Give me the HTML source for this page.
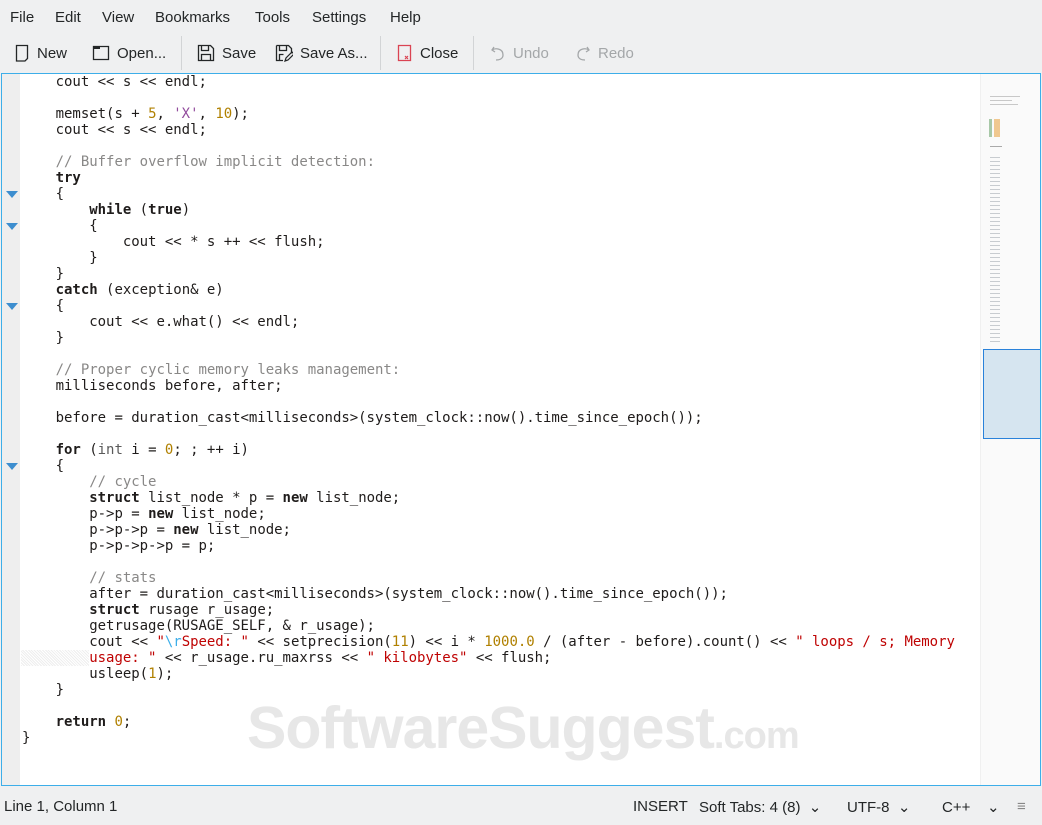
<!DOCTYPE html>
<html><head><meta charset="utf-8"><style>
*{margin:0;padding:0;box-sizing:border-box}
body{width:1042px;height:825px;background:#eff0f1;font-family:"Liberation Sans","DejaVu Sans",sans-serif;color:#232627;position:relative;overflow:hidden}
.menu{position:absolute;top:0;left:0;height:36px;font-size:15px}
.menu span{position:absolute;top:9px;white-space:nowrap}
.tb{position:absolute;top:36px;left:0;right:0;height:36px;font-size:15px}
.tb .b{position:absolute;top:8px;white-space:nowrap;display:flex;align-items:center}
.tb .b svg{margin-right:7px}
.sep{position:absolute;top:36px;width:1px;height:34px;background:#d2d4d6}
.dis{color:#a4a7a9}
.ed{position:absolute;left:1px;top:73px;width:1040px;height:713px;border:1px solid #3daee9;background:#fff;overflow:hidden}
.gut{position:absolute;left:0;top:0;width:18px;height:100%;background:#eeeeee}
.code{position:absolute;left:20px;top:0;font-family:"DejaVu Sans Mono","Liberation Mono",monospace;font-size:14px;letter-spacing:-0.025px;line-height:16px;white-space:pre;color:#1f1c1b}
.k{font-weight:bold}.c{color:#898887}.n{color:#b08000}.s{color:#bf0303}.ch{color:#924c9d}.e{color:#3daee9}
.mm{position:absolute;left:978px;top:0;width:60px;height:100%;background:#fafafa;border-left:1px solid #f0f0f0}
.vis{position:absolute;left:981px;top:275px;width:58px;height:90px;background:#d6e5f0;border:1px solid #2a82da}
.fold{position:absolute;left:4px;width:0;height:0;border-left:6px solid transparent;border-right:6px solid transparent;border-top:7px solid #3d8ecf}
.wm{position:absolute;left:247px;top:694px;font-size:59px;font-weight:bold;color:#e7e7e7;letter-spacing:-1px;font-family:"Liberation Sans",sans-serif}
.wm small{font-size:38px}
.st{position:absolute;top:786px;left:0;right:0;height:39px;font-size:15px}
.st span{position:absolute;top:12px;white-space:nowrap}
.ml{position:absolute;height:1px;background:#c8c8c8}
</style></head><body>
<div class="menu">
<span style="left:10px">File</span><span style="left:55px">Edit</span><span style="left:102px">View</span><span style="left:155px">Bookmarks</span><span style="left:255px">Tools</span><span style="left:312px">Settings</span><span style="left:390px">Help</span>
</div>
<div class="tb">
<div class="b" style="left:14px"><svg width="16" height="18" viewBox="0 0 16 18"><path d="M2.5 1.5h11v13l-2.5 2.5h-8.5z" fill="none" stroke="#232627" stroke-width="1.3"/></svg>New</div>
<div class="b" style="left:92px"><svg width="18" height="18" viewBox="0 0 18 18"><path d="M1.5 2.5h15v13h-15z" fill="none" stroke="#232627" stroke-width="1.3"/><path d="M1 2h7v3h-7z" fill="#232627"/></svg>Open...</div>
<div class="b" style="left:197px"><svg width="18" height="18" viewBox="0 0 18 18"><path d="M1.5 1.5h12l3 3v12h-15z" fill="none" stroke="#232627" stroke-width="1.3"/><path d="M4.5 1.5v5h7v-5M4.5 16.5v-6h9v6" fill="none" stroke="#232627" stroke-width="1.3"/></svg>Save</div>
<div class="b" style="left:275px"><svg width="18" height="18" viewBox="0 0 18 18"><path d="M1.5 1.5h12l3 3v5M8 16.5h-6.5v-15" fill="none" stroke="#232627" stroke-width="1.3"/><path d="M4.5 1.5v5h7v-5M4.5 16.5v-6h4" fill="none" stroke="#232627" stroke-width="1.3"/><path d="M10 17l1-3 6-6 2 2-6 6z" fill="none" stroke="#232627" stroke-width="1.2"/></svg>Save As...</div>
<div class="b" style="left:397px"><svg width="16" height="18" viewBox="0 0 16 18"><path d="M1.5 1.5h12v15h-12z" fill="none" stroke="#da4453" stroke-width="1.3"/><path d="M8 12l3 3M11 12l-3 3" stroke="#da4453" stroke-width="1.2"/></svg>Close</div>
<div class="b dis" style="left:490px"><svg width="16" height="18" viewBox="0 0 16 18"><path d="M4 3l-2 3 3 2M2 6c3-2 11-2 11 5c0 4-4 5-7 5" fill="none" stroke="#a4a7a9" stroke-width="1.3"/></svg>Undo</div>
<div class="b dis" style="left:575px"><svg width="16" height="18" viewBox="0 0 16 18"><path d="M12 3l2 3-3 2M14 6c-3-2-11-2-11 5c0 4 4 5 7 5" fill="none" stroke="#a4a7a9" stroke-width="1.3"/></svg>Redo</div>
</div>
<div class="sep" style="left:181px"></div><div class="sep" style="left:380px"></div><div class="sep" style="left:473px"></div>
<div class="ed">
<div class="gut"></div>
<div class="fold" style="top:117px"></div><div class="fold" style="top:149px"></div><div class="fold" style="top:229px"></div><div class="fold" style="top:389px"></div>
<div style="position:absolute;left:19px;top:576px;width:68px;height:16px;background:repeating-linear-gradient(45deg,#eee 0 1px,#fff 1px 2px)"></div>
<div class="code">    cout &lt;&lt; s &lt;&lt; endl;

    memset(s + <span class="n">5</span>, <span class="ch">'X'</span>, <span class="n">10</span>);
    cout &lt;&lt; s &lt;&lt; endl;

    <span class="c">// Buffer overflow implicit detection:</span>
    <span class="k">try</span>
    {
        <span class="k">while</span> (<span class="k">true</span>)
        {
            cout &lt;&lt; * s ++ &lt;&lt; flush;
        }
    }
    <span class="k">catch</span> (exception&amp; e)
    {
        cout &lt;&lt; e.what() &lt;&lt; endl;
    }

    <span class="c">// Proper cyclic memory leaks management:</span>
    milliseconds before, after;

    before = duration_cast&lt;milliseconds&gt;(system_clock::now().time_since_epoch());

    <span class="k">for</span> (<span style="color:#5a5a5a">int</span> i = <span class="n">0</span>; ; ++ i)
    {
        <span class="c">// cycle</span>
        <span class="k">struct</span> list_node * p = <span class="k">new</span> list_node;
        p-&gt;p = <span class="k">new</span> list_node;
        p-&gt;p-&gt;p = <span class="k">new</span> list_node;
        p-&gt;p-&gt;p-&gt;p = p;

        <span class="c">// stats</span>
        after = duration_cast&lt;milliseconds&gt;(system_clock::now().time_since_epoch());
        <span class="k">struct</span> rusage r_usage;
        getrusage(RUSAGE_SELF, &amp; r_usage);
        cout &lt;&lt; <span class="s">"<span class="e">\r</span>Speed: "</span> &lt;&lt; setprecision(<span class="n">11</span>) &lt;&lt; i * <span class="n">1000.0</span> / (after - before).count() &lt;&lt; <span class="s">" loops / s; Memory</span>
        <span class="s">usage: "</span> &lt;&lt; r_usage.ru_maxrss &lt;&lt; <span class="s">" kilobytes"</span> &lt;&lt; flush;
        usleep(<span class="n">1</span>);
    }

    <span class="k">return</span> <span class="n">0</span>;
}</div>
<div class="mm"></div>
<div class="ml" style="left:988px;top:22px;width:30px"></div>
<div class="ml" style="left:988px;top:26px;width:22px"></div>
<div class="ml" style="left:988px;top:30px;width:28px"></div>
<div style="position:absolute;left:987px;top:45px;width:3px;height:18px;background:#a8c8a8"></div>
<div style="position:absolute;left:992px;top:45px;width:6px;height:18px;background:#f0c890"></div>
<div class="ml" style="left:988px;top:72px;width:12px;background:#aaa"></div>
<div style="position:absolute;left:988px;top:80px;width:10px;height:190px;background:repeating-linear-gradient(#fafafa 0 3px,#c8ccd0 3px 4px)"></div>
<div class="vis"></div>
</div>
<div class="wm">SoftwareSuggest<small>.com</small></div>
<div class="st">
<span style="left:4px">Line 1, Column 1</span>
<span style="left:633px">INSERT</span>
<span style="left:699px">Soft Tabs: 4 (8) &nbsp;⌄</span>
<span style="left:847px">UTF-8 &nbsp;⌄</span>
<span style="left:942px">C++ &nbsp; &nbsp;⌄</span>
<span style="left:1017px;color:#888">≡</span>
</div>
</body></html>
